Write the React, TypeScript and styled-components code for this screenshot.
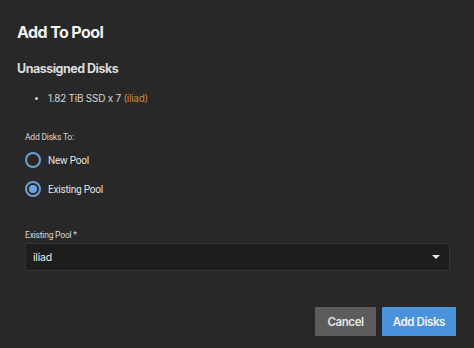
import React from "react";
import styled, { createGlobalStyle } from "styled-components";

const Global = createGlobalStyle`
  html, body { margin: 0; padding: 0; background: #282828; }
  body { width: 474px; height: 348px; overflow: hidden; }
  * { box-sizing: border-box; }
`;

const Dialog = styled.div`
  width: 474px;
  height: 348px;
  background: #282828;
  color: #e6e6e6;
  font-family: "Inter", "Noto Sans", sans-serif;
  display: flex;
  flex-direction: column;
  padding: 21px 18px 0 17px;
`;

const Title = styled.h1`
  margin: 0;
  font-size: 16px;
  font-weight: 700;
  line-height: 22px;
  color: #f4f4f4;
  letter-spacing: -0.6px;
`;

const SectionTitle = styled.h2`
  margin: 17px 0 0;
  font-size: 12.5px;
  font-weight: 700;
  line-height: 18px;
  color: #dcdcdc;
  letter-spacing: -0.5px;
`;

const List = styled.ul`
  margin: 13px 0 0;
  padding: 0 0 0 31px;
  list-style: disc;
  font-size: 10px;
  line-height: 14px;
  color: #d4d4d4;
  letter-spacing: -0.25px;
  li::marker { font-size: 9px; }
`;

const Pool = styled.span`
  color: #c08a45;
`;

const Form = styled.div`
  padding-left: 8px;
  display: flex;
  flex-direction: column;
`;

const SmallLabel = styled.div<{ $top: number }>`
  margin-top: ${(p) => p.$top}px;
  font-family: "Roboto", "Inter", sans-serif;
  font-size: 8.5px;
  line-height: 12px;
  color: #d8d8d8;
  letter-spacing: -0.2px;
`;

const RadioGroup = styled.div`
  margin-top: 9px;
  display: flex;
  flex-direction: column;
  gap: 13px;
`;

const RadioRow = styled.label`
  display: flex;
  align-items: center;
  gap: 7px;
  height: 16px;
  font-family: "Roboto", sans-serif;
  font-size: 10px;
  letter-spacing: -0.2px;
  color: #e4e4e4;
`;

const Circle = styled.span<{ $checked: boolean }>`
  width: 16px;
  height: 16px;
  border-radius: 50%;
  border: 2px solid #6a9fd8;
  background: #2b2620;
  display: flex;
  align-items: center;
  justify-content: center;
  flex-shrink: 0;
  &::after {
    content: "";
    width: 8px;
    height: 8px;
    border-radius: 50%;
    background: ${(p) => (p.$checked ? "#6aa6e4" : "transparent")};
  }
`;

const Select = styled.div`
  margin-top: 2px;
  width: 425px;
  height: 28px;
  background: #1d1d1d;
  border: 1px solid #333333;
  border-radius: 2px;
  display: flex;
  align-items: center;
  justify-content: space-between;
  padding: 0 9px 0 7px;
  font-family: "Inter", sans-serif;
  font-size: 10.5px;
  letter-spacing: -0.2px;
  color: #ececec;
`;

const Arrow = styled.span`
  width: 0;
  height: 0;
  border-left: 4.5px solid transparent;
  border-right: 4.5px solid transparent;
  border-top: 4.5px solid #e8e8e8;
`;

const Actions = styled.div`
  margin-top: 36px;
  display: flex;
  justify-content: flex-end;
  gap: 6px;
  padding-right: 0;
`;

const Button = styled.button<{ $primary?: boolean }>`
  height: 29px;
  padding: 0 ${(p) => (p.$primary ? 11 : 12)}px;
  border: none;
  border-radius: 1px;
  background: ${(p) => (p.$primary ? "#4b92dc" : "#5c5c5c")};
  color: ${(p) => (p.$primary ? "#eef4fc" : "#e6e6e6")};
  font-family: "Inter", sans-serif;
  font-size: 11.5px;
  font-weight: 600;
  letter-spacing: -0.4px;
  cursor: pointer;
`;

export default function App() {
  return (
    <>
      <Global />
      <Dialog>
        <Title>Add To Pool</Title>
        <SectionTitle>Unassigned Disks</SectionTitle>
        <List>
          <li>
            1.82 TiB SSD x 7 <Pool>(iliad)</Pool>
          </li>
        </List>
        <Form>
          <SmallLabel $top={26}>Add Disks To:</SmallLabel>
          <RadioGroup>
            <RadioRow>
              <Circle $checked={false} />
              New Pool
            </RadioRow>
            <RadioRow>
              <Circle $checked={true} />
              Existing Pool
            </RadioRow>
          </RadioGroup>
          <SmallLabel $top={32}>Existing Pool *</SmallLabel>
          <Select>
            <span>iliad</span>
            <Arrow />
          </Select>
        </Form>
        <Actions>
          <Button>Cancel</Button>
          <Button $primary>Add Disks</Button>
        </Actions>
      </Dialog>
    </>
  );
}
